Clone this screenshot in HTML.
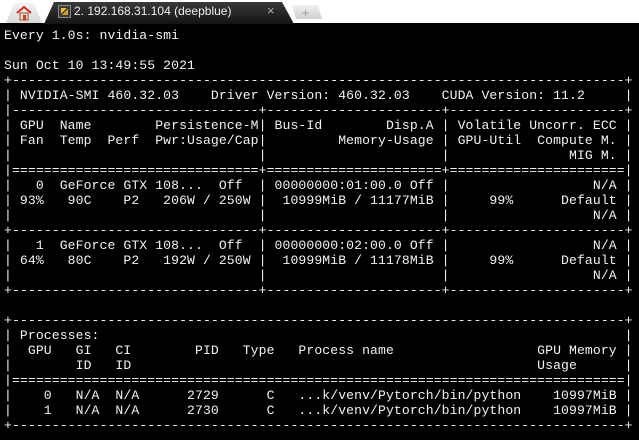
<!DOCTYPE html>
<html><head><meta charset="utf-8"><style>
html,body{margin:0;padding:0;width:639px;height:440px;overflow:hidden;background:#000;}
#bar{position:absolute;left:0;top:0;width:639px;height:23px;background:#fff;}
#home{position:absolute;left:6px;top:3px;width:36px;height:20px;background:linear-gradient(#f4f4f4,#d8d8d8);clip-path:polygon(8px 0,28px 0,36px 20px,0 20px);}
#tab{position:absolute;left:44px;top:2px;width:250px;height:22px;background:linear-gradient(#3a3a3a,#141414);clip-path:polygon(10px 0,238px 0,250px 22px,0 22px);}
#new{position:absolute;left:292px;top:5px;width:30px;height:14px;background:linear-gradient(#f0f0f0,#cfcfcf);clip-path:polygon(0 0,26px 0,30px 14px,4px 14px);border:0;}
#tabt{position:absolute;left:74px;top:4px;font:12px "Liberation Sans",sans-serif;color:#eee;}
#x{position:absolute;left:267px;top:3px;font:13px "Liberation Sans",sans-serif;color:#aaa;}
#key{position:absolute;left:58px;top:5px;width:11px;height:11px;background:#3a3a3a;border:1px solid #888;}
#key:after{content:"";position:absolute;left:2px;top:2px;width:7px;height:7px;background:linear-gradient(135deg,#f0c030 40%,transparent 40%,transparent 55%,#d8a020 55%);}
pre{position:absolute;left:4px;top:28px;margin:0;font:13.1px/15px "Liberation Mono",monospace;letter-spacing:0.1px;color:#f2f2f2;}
</style></head><body>
<div id="bar"></div>
<div id="home"></div>
<svg style="position:absolute;left:16px;top:5px" width="16" height="16" viewBox="0 0 16 16"><path d="M1 8 L8 2 L15 8" fill="none" stroke="#d03020" stroke-width="2"/><rect x="4" y="8" width="8" height="7" fill="#e8e0d0" stroke="#a05030"/><rect x="7" y="10" width="3" height="5" fill="#d04020"/></svg>
<div id="tab"></div>
<div id="key"></div>
<div id="tabt">2. 192.168.31.104 (deepblue)</div>
<div id="x">×</div>
<div id="new"></div>
<div style="position:absolute;left:302px;top:6px;font:12px 'Liberation Sans',sans-serif;color:#999">+</div>
<pre>Every 1.0s: nvidia-smi

Sun Oct 10 13:49:55 2021
+-----------------------------------------------------------------------------+
| NVIDIA-SMI 460.32.03    Driver Version: 460.32.03    CUDA Version: 11.2     |
|-------------------------------+----------------------+----------------------+
| GPU  Name        Persistence-M| Bus-Id        Disp.A | Volatile Uncorr. ECC |
| Fan  Temp  Perf  Pwr:Usage/Cap|         Memory-Usage | GPU-Util  Compute M. |
|                               |                      |               MIG M. |
|===============================+======================+======================|
|   0  GeForce GTX 108...  Off  | 00000000:01:00.0 Off |                  N/A |
| 93%   90C    P2   206W / 250W |  10999MiB / 11177MiB |     99%      Default |
|                               |                      |                  N/A |
+-------------------------------+----------------------+----------------------+
|   1  GeForce GTX 108...  Off  | 00000000:02:00.0 Off |                  N/A |
| 64%   80C    P2   192W / 250W |  10999MiB / 11178MiB |     99%      Default |
|                               |                      |                  N/A |
+-------------------------------+----------------------+----------------------+

+-----------------------------------------------------------------------------+
| Processes:                                                                  |
|  GPU   GI   CI        PID   Type   Process name                  GPU Memory |
|        ID   ID                                                   Usage      |
|=============================================================================|
|    0   N/A  N/A      2729      C   ...k/venv/Pytorch/bin/python    10997MiB |
|    1   N/A  N/A      2730      C   ...k/venv/Pytorch/bin/python    10997MiB |
+-----------------------------------------------------------------------------+</pre>
</body></html>
